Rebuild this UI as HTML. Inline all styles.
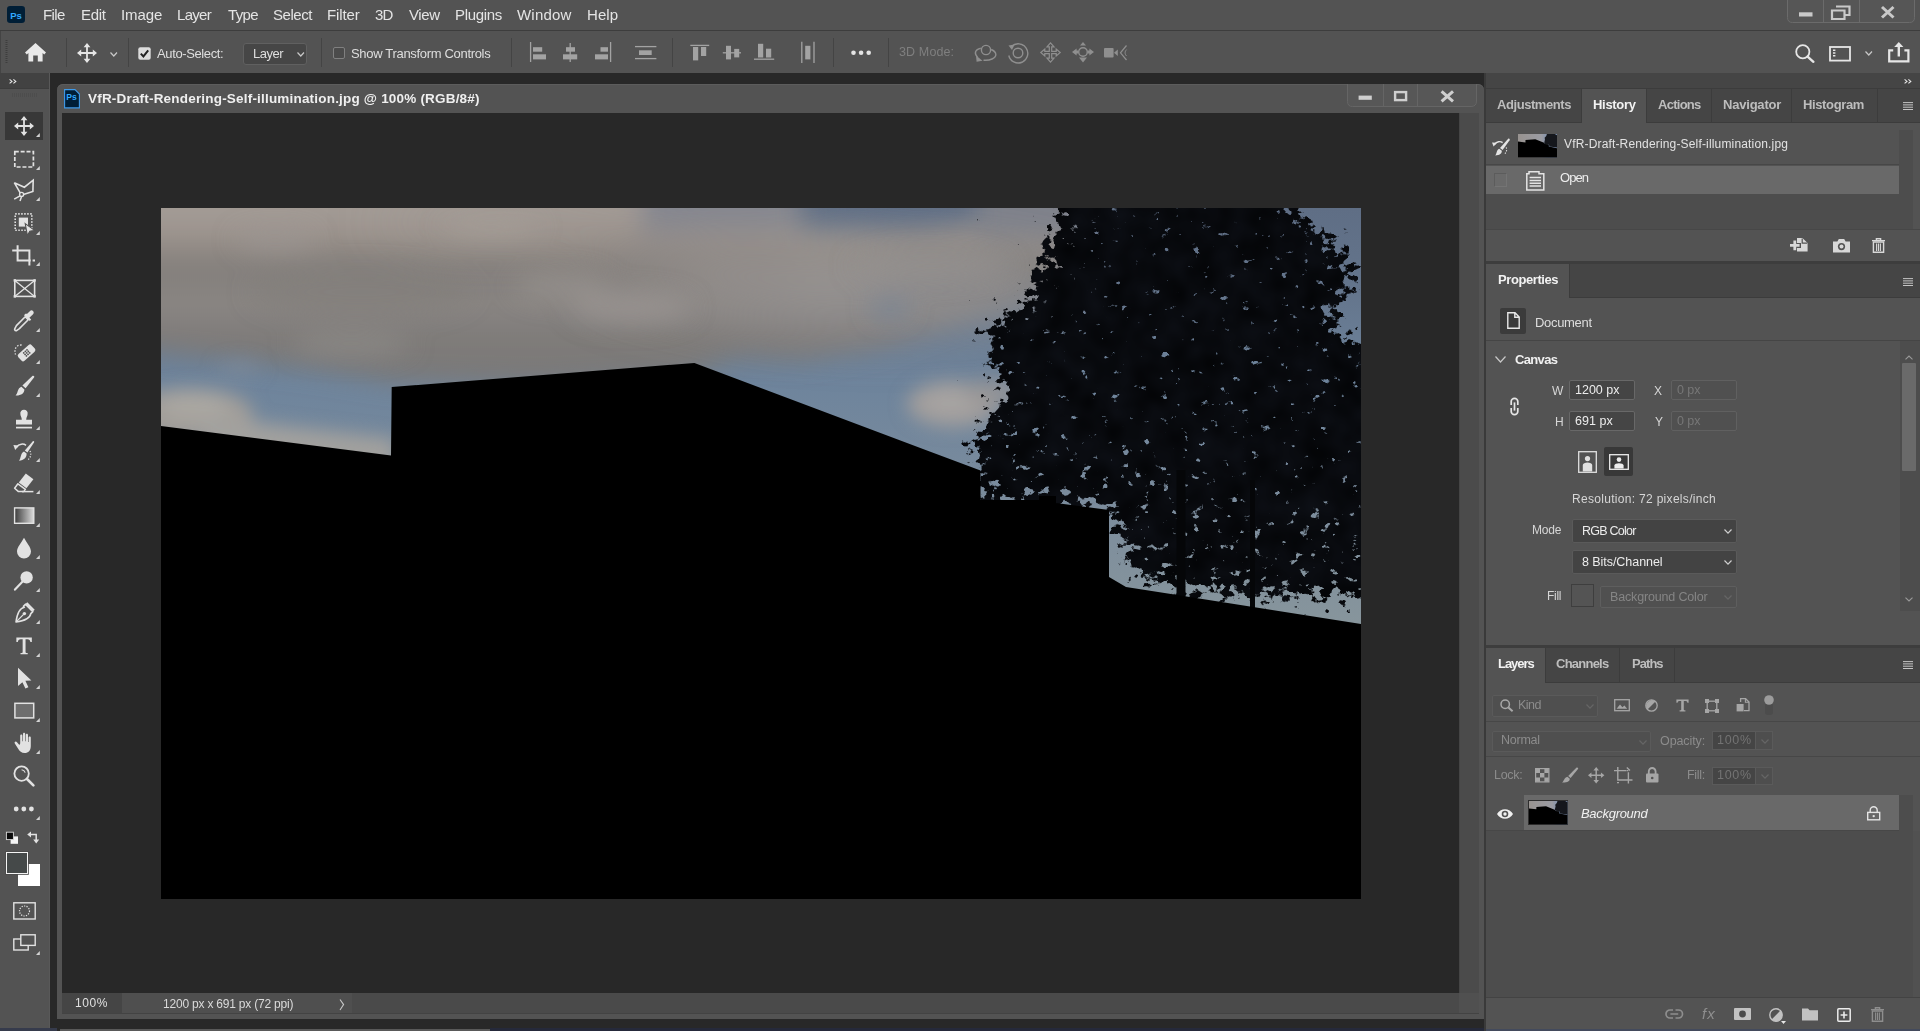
<!DOCTYPE html>
<html>
<head>
<meta charset="utf-8">
<title>Photoshop</title>
<style>
*{margin:0;padding:0;box-sizing:border-box}
html,body{width:1920px;height:1031px;overflow:hidden;background:#535353;font-family:"Liberation Sans",sans-serif;color:#ddd;font-size:13px}
.a{position:absolute}
.t{position:absolute;white-space:nowrap;line-height:1;will-change:transform}
svg{position:absolute;overflow:visible}
</style>
</head>
<body>
<!-- TOPBARS -->
<div class="a" style="left:0px;top:0px;width:1920px;height:30px;background:#535353;"></div>
<div class="a" style="left:0px;top:30px;width:1920px;height:1px;background:#3d3d3d;"></div>
<div class="a" style="left:0px;top:31px;width:1920px;height:42px;background:#535353;"></div>
<svg style="left:7px;top:6px;" width="18" height="17" viewBox="0 0 18 17"><rect width="18" height="17" rx="3.2" fill="#001e36"/><text x="9" y="12.6" font-family="Liberation Sans" font-weight="bold" font-size="9.5" fill="#31a8ff" text-anchor="middle">Ps</text></svg>
<div class="t" style="left:43.3px;top:6.90px;font-size:15px;color:#e4e4e4;letter-spacing:-0.590px;">File</div>
<div class="t" style="left:81.0px;top:6.90px;font-size:15px;color:#e4e4e4;letter-spacing:-0.283px;">Edit</div>
<div class="t" style="left:121.0px;top:6.90px;font-size:15px;color:#e4e4e4;letter-spacing:-0.098px;">Image</div>
<div class="t" style="left:177.3px;top:6.90px;font-size:15px;color:#e4e4e4;letter-spacing:-0.706px;">Layer</div>
<div class="t" style="left:227.7px;top:6.90px;font-size:15px;color:#e4e4e4;letter-spacing:-0.640px;">Type</div>
<div class="t" style="left:273.3px;top:6.90px;font-size:15px;color:#e4e4e4;letter-spacing:-0.458px;">Select</div>
<div class="t" style="left:327.3px;top:6.90px;font-size:15px;color:#e4e4e4;letter-spacing:-0.127px;">Filter</div>
<div class="t" style="left:375.0px;top:6.90px;font-size:15px;color:#e4e4e4;letter-spacing:-0.875px;">3D</div>
<div class="t" style="left:409.0px;top:6.90px;font-size:15px;color:#e4e4e4;letter-spacing:-0.414px;">View</div>
<div class="t" style="left:455.0px;top:6.90px;font-size:15px;color:#e4e4e4;letter-spacing:-0.316px;">Plugins</div>
<div class="t" style="left:517.3px;top:6.90px;font-size:15px;color:#e4e4e4;letter-spacing:0.210px;">Window</div>
<div class="t" style="left:587.3px;top:6.90px;font-size:15px;color:#e4e4e4;letter-spacing:0.050px;">Help</div>
<svg style="left:1786px;top:0px;" width="130" height="24" viewBox="0 0 130 24"><path d="M1.5 -1 V17.5 Q1.5 22.5 6.5 22.5 H123.5 Q128.5 22.5 128.5 17.5 V-1" fill="#565656" stroke="#6b6b6b" stroke-width="1"/>
<path d="M37.5 0 V22 M73.5 0 V22" stroke="#6b6b6b" stroke-width="1"/>
<rect x="13" y="12.3" width="13.5" height="4.2" fill="#c9c9c9"/>
<path d="M50 6.5 H63.5 V15 H58 M46 10.5 H58.5 V19 H46Z" fill="none" stroke="#c9c9c9" stroke-width="2.2"/>
<path d="M96 7 L107.5 17.5 M107.5 7 L96 17.5" stroke="#c9c9c9" stroke-width="3"/></svg>
<div class="a" style="left:0px;top:31px;width:1px;height:42px;background:#444;"></div>
<svg style="left:5px;top:40px;" width="3" height="24" viewBox="0 0 3 24"><path d="M1.5 0 V24" stroke="#3e3e3e" stroke-width="2" stroke-dasharray="1 1"/></svg>
<div class="a" style="left:66px;top:38px;width:1px;height:29px;background:#444;"></div>
<div class="a" style="left:128px;top:38px;width:1px;height:29px;background:#444;"></div>
<div class="a" style="left:321px;top:38px;width:1px;height:29px;background:#444;"></div>
<div class="a" style="left:511px;top:38px;width:1px;height:29px;background:#444;"></div>
<div class="a" style="left:672px;top:38px;width:1px;height:29px;background:#444;"></div>
<div class="a" style="left:833px;top:38px;width:1px;height:29px;background:#444;"></div>
<div class="a" style="left:888px;top:38px;width:1px;height:29px;background:#444;"></div>
<svg style="left:25px;top:43px;" width="21" height="19" viewBox="0 0 21 19"><path d="M10.5 0 L21 9.6 L19.2 11.4 L17.6 10 V18.6 H12.8 V12.6 H8.2 V18.6 H3.4 V10 L1.8 11.4 L0 9.6Z" fill="#e9e9e9"/></svg>
<svg style="left:77px;top:42.5px;" width="20" height="20" viewBox="0 0 20 20"><path d="M10 0 L13.4 4.2 H10.9 V9.1 H15.8 V6.6 L20 10 L15.8 13.4 V10.9 H10.9 V15.8 H13.4 L10 20 L6.6 15.8 H9.1 V10.9 H4.2 V13.4 L0 10 L4.2 6.6 V9.1 H9.1 V4.2 H6.6Z" fill="#e6e6e6"/></svg>
<svg style="left:110px;top:51.5px;" width="8" height="5" viewBox="0 0 8 5"><path d="M0.5 0.5 L3.8 4 L7 0.5" fill="none" stroke="#c8c8c8" stroke-width="1.2"/></svg>
<svg style="left:138px;top:46.5px;" width="13" height="13" viewBox="0 0 13 13"><rect x="0.3" y="0.3" width="12.4" height="12.4" rx="2" fill="#dcdcdc"/><path d="M2.8 6.6 L5.4 9.4 L10.2 3.4" fill="none" stroke="#222" stroke-width="2"/></svg>
<div class="t" style="left:157.3px;top:47.30px;font-size:13px;color:#dedede;letter-spacing:-0.374px;">Auto-Select:</div>
<div class="a" style="left:243px;top:43px;width:64px;height:22px;background:#464646;border:1px solid #606060;border-radius:3px;"></div>
<div class="t" style="left:252.7px;top:47.30px;font-size:13px;color:#dedede;letter-spacing:-0.480px;">Layer</div>
<svg style="left:296.5px;top:52px;" width="8" height="5" viewBox="0 0 8 5"><path d="M0.5 0.5 L3.8 4 L7 0.5" fill="none" stroke="#c8c8c8" stroke-width="1.2"/></svg>
<div class="a" style="left:333px;top:47px;width:12px;height:12px;background:#4b4b4b;border:1px solid #808080;border-radius:2px;"></div>
<div class="t" style="left:351.0px;top:47.30px;font-size:13px;color:#dedede;letter-spacing:-0.317px;">Show Transform Controls</div>
<svg style="left:0px;top:0px;" width="900" height="74" viewBox="0 0 900 74"><rect x="533" y="47.2" width="9.2" height="4.5" fill="#a3a3a3"/><rect x="533" y="54.3" width="13.0" height="5.1" fill="#a3a3a3"/><path d="M530.6 42 L530.6 62" stroke="#a3a3a3" stroke-width="1.3"/><rect x="566" y="47.2" width="9.0" height="4.5" fill="#a3a3a3"/><rect x="563" y="54.3" width="14.2" height="5.1" fill="#a3a3a3"/><path d="M570.2 43 L570.2 62" stroke="#a3a3a3" stroke-width="1.3"/><rect x="600.5" y="47.2" width="7.5" height="4.5" fill="#a3a3a3"/><rect x="595" y="54.3" width="13.0" height="5.1" fill="#a3a3a3"/><path d="M610.6 42 L610.6 62" stroke="#a3a3a3" stroke-width="1.3"/><rect x="639" y="50.3" width="12.7" height="4.7" fill="#a3a3a3"/><path d="M635 46.6 L656.4 46.6" stroke="#a3a3a3" stroke-width="1.3"/><path d="M635 58.6 L656.4 58.6" stroke="#a3a3a3" stroke-width="1.3"/><rect x="693" y="47" width="5.2" height="13.4" fill="#a3a3a3"/><rect x="701" y="47" width="5.2" height="9.0" fill="#a3a3a3"/><path d="M690.3 45.4 L709.2 45.4" stroke="#a3a3a3" stroke-width="1.3"/><rect x="726" y="45.8" width="5.0" height="13.6" fill="#a3a3a3"/><rect x="734.2" y="48.9" width="5.0" height="8.5" fill="#a3a3a3"/><path d="M722.8 52.8 L741 52.8" stroke="#a3a3a3" stroke-width="1.3"/><rect x="758" y="43.8" width="5.2" height="13.7" fill="#a3a3a3"/><rect x="766" y="48.7" width="5.2" height="8.8" fill="#a3a3a3"/><path d="M754 59.2 L774.2 59.2" stroke="#a3a3a3" stroke-width="1.3"/><rect x="805.2" y="45.8" width="5.2" height="13.6" fill="#a3a3a3"/><path d="M801.8 41.8 L801.8 62.9" stroke="#a3a3a3" stroke-width="1.3"/><path d="M814 41.8 L814 62.9" stroke="#a3a3a3" stroke-width="1.3"/><circle cx="853.5" cy="52.8" r="2.3" fill="#e4e4e4"/><circle cx="861.1" cy="52.8" r="2.3" fill="#e4e4e4"/><circle cx="868.7" cy="52.8" r="2.3" fill="#e4e4e4"/></svg>
<div class="t" style="left:899.4px;top:46.22px;font-size:12.5px;color:#7f7f7f;letter-spacing:0.129px;">3D Mode:</div>
<svg style="left:973px;top:43px;" width="25" height="20" viewBox="0 0 25 20"><g fill="none" stroke="#8f8f8f" stroke-width="1.4"><circle cx="13" cy="7" r="4.6"/><path d="M7.8 5.2 C2 6.5 0.8 10.5 4.5 14.2 M18.2 6.5 C24 9 24.5 13.5 19 16 C16.5 17.2 13 17.4 10.5 17.2"/></g><path d="M3 12.5 L9.5 17.8 L3.6 18.8Z" fill="#8f8f8f"/></svg>
<svg style="left:1006px;top:41px;" width="23" height="23" viewBox="0 0 23 23"><g fill="none" stroke="#8f8f8f" stroke-width="1.4"><circle cx="12" cy="12" r="4.8"/><path d="M5.5 5.5 A9.6 9.6 0 1 1 2.8 14.5"/></g><path d="M2.5 4.5 L8.6 3.4 L6 9Z" fill="#8f8f8f"/></svg>
<svg style="left:1039.5px;top:42px;" width="21" height="21" viewBox="0 0 21 21"><path d="M10.5 0.8 L14 4.8 H11.7 V9.3 H16.2 V7 L20.2 10.5 L16.2 14 V11.7 H11.7 V16.2 H14 L10.5 20.2 L7 16.2 H9.3 V11.7 H4.8 V14 L0.8 10.5 L4.8 7 V9.3 H9.3 V4.8 H7Z" fill="none" stroke="#8f8f8f" stroke-width="1.2"/></svg>
<svg style="left:1071.5px;top:42px;" width="22" height="21" viewBox="0 0 22 21"><circle cx="11" cy="10" r="4.3" fill="none" stroke="#8f8f8f" stroke-width="1.4"/><path d="M11 0 L14 3.6 H8Z M11 20.6 L15 15.6 H7Z M0 10 L4.6 6.4 V13.6Z M22 10 L17.4 6.4 V13.6Z" fill="#8f8f8f"/><path d="M4 8.6 h2.2 v2.8 h-2.2z M15.8 8.6 h2.2 v2.8 h-2.2z" fill="#8f8f8f"/></svg>
<svg style="left:1104px;top:44.5px;" width="24" height="16" viewBox="0 0 24 16"><rect x="0" y="3" width="9.6" height="9.6" rx="1" fill="#8f8f8f"/><path d="M10 7.8 L13.8 4.6 V11 Z" fill="#8f8f8f"/><path d="M22.5 0.5 L16.5 7.8 L22.5 15" fill="none" stroke="#8f8f8f" stroke-width="1.2"/><path d="M22.6 4.6 C20.6 6.6 20.6 9 22.6 11" fill="none" stroke="#8f8f8f" stroke-width="1"/></svg>
<svg style="left:1795px;top:44px;" width="20" height="19" viewBox="0 0 20 19"><circle cx="7.8" cy="7.8" r="6.6" fill="none" stroke="#e6e6e6" stroke-width="1.8"/><path d="M12.6 12.6 L18.4 17.8" stroke="#e6e6e6" stroke-width="2.4" stroke-linecap="round"/></svg>
<svg style="left:1829px;top:45.5px;" width="22" height="16" viewBox="0 0 22 16"><rect x="1" y="1" width="20" height="13.6" fill="none" stroke="#e6e6e6" stroke-width="1.8"/><path d="M4 4.2 h2.4 M4 7 h2.4 M4 9.8 h2.4" stroke="#e6e6e6" stroke-width="1.6"/><path d="M7.6 1 V14.6" stroke="#e6e6e6" stroke-width="0"/></svg>
<svg style="left:1864.5px;top:51px;" width="8" height="5" viewBox="0 0 8 5"><path d="M0.5 0.5 L3.8 4 L7 0.5" fill="none" stroke="#c8c8c8" stroke-width="1.2"/></svg>
<svg style="left:1888px;top:41.5px;" width="22" height="21" viewBox="0 0 22 21"><path d="M5.2 8.4 H1.2 V19.4 H20.4 V8.4 H16.4" fill="none" stroke="#e6e6e6" stroke-width="2.2"/><path d="M10.8 14.5 V3.6" stroke="#e6e6e6" stroke-width="2.4"/><path d="M10.8 0 L15.4 5 H6.2Z" fill="#e6e6e6"/></svg>
<!-- WORKSPACE -->
<div class="a" style="left:50px;top:73px;width:1435px;height:958px;background:#282828;"></div>
<div class="a" style="left:0px;top:73px;width:50px;height:958px;background:#535353;"></div>
<!-- TOOLS -->
<div class="a" style="left:0px;top:73px;width:50px;height:15px;background:#424242;"></div>
<div class="a" style="left:0px;top:88px;width:50px;height:1px;background:#3d3d3d;"></div>
<div class="a" style="left:49px;top:73px;width:1px;height:958px;background:#595959;"></div>
<svg style="left:8.5px;top:78.5px;" width="8" height="5" viewBox="0 0 8 5"><path d="M0.6 0.4 L3 2.4 L0.6 4.4 M4.4 0.4 L6.8 2.4 L4.4 4.4" fill="none" stroke="#e8e8e8" stroke-width="1.1"/></svg>
<svg style="left:12px;top:93px;" width="25" height="4" viewBox="0 0 25 4"><path d="M0 1 H25 M0 3 H25" stroke="#484848" stroke-width="1" stroke-dasharray="1 1"/></svg>
<div class="a" style="left:5px;top:111.5px;width:37.5px;height:28px;background:#383838;"></div>
<svg style="left:13.3px;top:115px;" width="22" height="22" viewBox="0 0 22 22"><g transform="translate(1,1)"><path d="M10 0 L13.4 4.2 H10.9 V9.1 H15.8 V6.6 L20 10 L15.8 13.4 V10.9 H10.9 V15.8 H13.4 L10 20 L6.6 15.8 H9.1 V10.9 H4.2 V13.4 L0 10 L4.2 6.6 V9.1 H9.1 V4.2 H6.6Z" fill="#e2e2e2"/></g></svg>
<svg style="left:36.4px;top:133.3px;" width="3.8" height="4" viewBox="0 0 3.8 4"><path d="M3.8 0 V4 H0Z" fill="#d4d4d4"/></svg>
<svg style="left:13.3px;top:147.5px;" width="22" height="22" viewBox="0 0 22 22"><rect x="1.8" y="3.6" width="18.6" height="15.4" fill="none" stroke="#e2e2e2" stroke-width="1.7" stroke-dasharray="4 1.85"/></svg>
<svg style="left:36.4px;top:165.8px;" width="3.8" height="4" viewBox="0 0 3.8 4"><path d="M3.8 0 V4 H0Z" fill="#d4d4d4"/></svg>
<svg style="left:13.3px;top:179px;" width="22" height="22" viewBox="0 0 22 22"><path d="M1.3 3.7 L11.4 8.2 L20.2 1.2 L19.9 12.4 L10.4 15.4 M1.3 3.7 L7.2 13.8" fill="none" stroke="#e2e2e2" stroke-width="1.6" stroke-linejoin="miter"/><circle cx="8.6" cy="15.4" r="2" fill="none" stroke="#e2e2e2" stroke-width="1.4"/><path d="M7 16.8 L1.2 20.2 M8.6 17.6 L7 22" stroke="#e2e2e2" stroke-width="1.5"/></svg>
<svg style="left:36.4px;top:197.3px;" width="3.8" height="4" viewBox="0 0 3.8 4"><path d="M3.8 0 V4 H0Z" fill="#d4d4d4"/></svg>
<svg style="left:13.3px;top:212.5px;" width="22" height="22" viewBox="0 0 22 22"><rect x="2.2" y="0.9" width="16.6" height="16.4" fill="none" stroke="#e2e2e2" stroke-width="1.6" stroke-dasharray="1.5 1.5"/><rect x="5.8" y="4.6" width="9.2" height="9" fill="#e2e2e2"/><path d="M12.2 10.6 L21.6 17.4 L16.8 18.2 L14.4 22.6Z" fill="#e2e2e2" stroke="#535353" stroke-width="1.1"/></svg>
<svg style="left:36.4px;top:230.8px;" width="3.8" height="4" viewBox="0 0 3.8 4"><path d="M3.8 0 V4 H0Z" fill="#d4d4d4"/></svg>
<svg style="left:13.3px;top:244px;" width="22" height="22" viewBox="0 0 22 22"><path d="M4.6 1.2 V16.6 H17.8 M19.6 16.6 H22 M-0.8 6.4 H16.4 V21.6" fill="none" stroke="#e2e2e2" stroke-width="2"/></svg>
<svg style="left:36.4px;top:262.3px;" width="3.8" height="4" viewBox="0 0 3.8 4"><path d="M3.8 0 V4 H0Z" fill="#d4d4d4"/></svg>
<svg style="left:13.3px;top:277px;" width="22" height="22" viewBox="0 0 22 22"><rect x="1.8" y="3.4" width="19.8" height="16" fill="none" stroke="#e2e2e2" stroke-width="1.6"/><path d="M1.8 3.4 L21.6 19.4 M21.6 3.4 L1.8 19.4" stroke="#e2e2e2" stroke-width="1.3"/><g fill="#e2e2e2"><rect x="0.6" y="2.2" width="2.4" height="2.4"/><rect x="20.4" y="2.2" width="2.4" height="2.4"/><rect x="0.6" y="18.2" width="2.4" height="2.4"/><rect x="20.4" y="18.2" width="2.4" height="2.4"/></g></svg>
<svg style="left:13.3px;top:309.5px;" width="22" height="22" viewBox="0 0 22 22"><path d="M3.2 20.8 C1.6 20.8 1.2 19.2 2.2 18 L3.4 15.6 L12.2 6.8 L15.2 9.8 L6.4 18.6 Z" fill="none" stroke="#e2e2e2" stroke-width="1.6" stroke-linejoin="round"/><path d="M11 5.2 L16.8 11 L18.2 9.6 L16.4 7.8 L19.8 4.4 C21.2 3 20.8 1.6 20 0.9 C19 0.1 17.8 0.2 16.8 1.2 L14.2 3.8 L12.4 3.8Z" fill="#e2e2e2"/></svg>
<svg style="left:36.4px;top:327.8px;" width="3.8" height="4" viewBox="0 0 3.8 4"><path d="M3.8 0 V4 H0Z" fill="#d4d4d4"/></svg>
<svg style="left:13.3px;top:342px;" width="22" height="22" viewBox="0 0 22 22"><g transform="rotate(-42 13 11)"><rect x="4.5" y="6.8" width="18" height="9" rx="2.2" fill="#e2e2e2"/><g fill="#535353"><circle cx="11.4" cy="9.4" r="0.9"/><circle cx="13.6" cy="9.4" r="0.9"/><circle cx="15.8" cy="9.4" r="0.9"/><circle cx="11.4" cy="11.4" r="0.9"/><circle cx="13.6" cy="11.4" r="0.9"/><circle cx="15.8" cy="11.4" r="0.9"/><circle cx="11.4" cy="13.4" r="0.9"/><circle cx="13.6" cy="13.4" r="0.9"/><circle cx="15.8" cy="13.4" r="0.9"/></g></g><path d="M8.6 3 C3.4 2.6 0.6 7.4 2.6 12.6" fill="none" stroke="#e2e2e2" stroke-width="1.3" stroke-dasharray="1.5 1.6"/></svg>
<svg style="left:36.4px;top:360.3px;" width="3.8" height="4" viewBox="0 0 3.8 4"><path d="M3.8 0 V4 H0Z" fill="#d4d4d4"/></svg>
<svg style="left:13.3px;top:374.5px;" width="22" height="22" viewBox="0 0 22 22"><path d="M19.6 0.8 C20.8 0.2 21.8 1.4 21 2.6 L12.6 13.2 L9.4 10.6Z" fill="#e2e2e2"/><path d="M8.4 11.8 L11.4 14.4 C11.4 18.4 8 20.6 2.6 20.4 C5 18.6 4.4 13 8.4 11.8Z" fill="#e2e2e2"/></svg>
<svg style="left:36.4px;top:392.8px;" width="3.8" height="4" viewBox="0 0 3.8 4"><path d="M3.8 0 V4 H0Z" fill="#d4d4d4"/></svg>
<svg style="left:13.3px;top:407.5px;" width="22" height="22" viewBox="0 0 22 22"><g transform="translate(0,1.4)"><path d="M7.4 4.8 A3.7 3.7 0 1 1 14.6 4.8 C14.6 6.8 13.2 7.4 13.2 10.4 H19 V15.2 H3 V10.4 H8.8 C8.8 7.4 7.4 6.8 7.4 4.8Z" fill="#e2e2e2"/><path d="M3 18.2 H19" stroke="#e2e2e2" stroke-width="1.7"/></g></svg>
<svg style="left:36.4px;top:425.8px;" width="3.8" height="4" viewBox="0 0 3.8 4"><path d="M3.8 0 V4 H0Z" fill="#d4d4d4"/></svg>
<svg style="left:13.3px;top:439.5px;" width="22" height="22" viewBox="0 0 22 22"><path d="M19.8 1.2 C20.8 0.6 21.6 1.6 21 2.6 L14.4 12.6 L11.8 10.6Z" fill="#e2e2e2"/><path d="M11 11.6 L13.6 13.6 C13.8 17.4 11 20.6 6 20.8 C8 18.8 7.4 13.2 11 11.6Z" fill="#e2e2e2"/><path d="M3.4 7.2 C6 3.6 10.6 3.4 13 5.4" fill="none" stroke="#e2e2e2" stroke-width="1.5"/><path d="M0.4 5 L6 5.6 L2.2 10Z" fill="#e2e2e2"/><path d="M17 11 C18.6 14.4 17.6 17.8 15 19.6" fill="none" stroke="#e2e2e2" stroke-width="1.2" stroke-dasharray="1.2 1.5"/></svg>
<svg style="left:36.4px;top:457.8px;" width="3.8" height="4" viewBox="0 0 3.8 4"><path d="M3.8 0 V4 H0Z" fill="#d4d4d4"/></svg>
<svg style="left:13.3px;top:472px;" width="22" height="22" viewBox="0 0 22 22"><path d="M12.8 1.6 L20.4 7.2 L13.4 16.2 L5.8 10.6Z" fill="#e2e2e2"/><path d="M4.9 11.8 L12.4 17.4 L10.8 19.4 H5.2 L1.6 16.2Z" fill="none" stroke="#e2e2e2" stroke-width="1.5" stroke-linejoin="round"/><path d="M9 19.6 H20.4" stroke="#e2e2e2" stroke-width="1.5"/></svg>
<svg style="left:36.4px;top:490.3px;" width="3.8" height="4" viewBox="0 0 3.8 4"><path d="M3.8 0 V4 H0Z" fill="#d4d4d4"/></svg>
<svg style="left:13.3px;top:504.5px;" width="22" height="22" viewBox="0 0 22 22"><defs><linearGradient id="tg" x1="0" x2="1"><stop offset="0" stop-color="#3c3c3c"/><stop offset="1" stop-color="#dcdcdc"/></linearGradient></defs><rect x="1.6" y="2.9" width="19.2" height="15.4" fill="url(#tg)" stroke="#e2e2e2" stroke-width="1.4"/></svg>
<svg style="left:36.4px;top:522.8px;" width="3.8" height="4" viewBox="0 0 3.8 4"><path d="M3.8 0 V4 H0Z" fill="#d4d4d4"/></svg>
<svg style="left:13.3px;top:537px;" width="22" height="22" viewBox="0 0 22 22"><path d="M11 0.8 C13.6 5.8 18 10.2 18 14.6 A7 7 0 0 1 4 14.6 C4 10.2 8.4 5.8 11 0.8Z" fill="#e2e2e2"/></svg>
<svg style="left:36.4px;top:555.3px;" width="3.8" height="4" viewBox="0 0 3.8 4"><path d="M3.8 0 V4 H0Z" fill="#d4d4d4"/></svg>
<svg style="left:13.3px;top:569.5px;" width="22" height="22" viewBox="0 0 22 22"><circle cx="13.6" cy="7.4" r="6.2" fill="#e2e2e2"/><path d="M9.6 11.6 L2 19.6" stroke="#e2e2e2" stroke-width="2.2" stroke-linecap="round"/></svg>
<svg style="left:36.4px;top:587.8px;" width="3.8" height="4" viewBox="0 0 3.8 4"><path d="M3.8 0 V4 H0Z" fill="#d4d4d4"/></svg>
<svg style="left:13.3px;top:602px;" width="22" height="22" viewBox="0 0 22 22"><path d="M12.4 2.2 L19.8 9.6 L17.8 11.6 C17.2 15.4 13.4 18.6 3 20 C4.4 9.6 7.6 5.8 11.4 5.2 L10.4 4.2Z" fill="none" stroke="#e2e2e2" stroke-width="1.6" stroke-linejoin="round"/><path d="M3.4 19.6 L10.6 12.4" stroke="#e2e2e2" stroke-width="1.3"/><circle cx="11.4" cy="11.6" r="1.7" fill="#e2e2e2"/><path d="M13.4 1.2 L20.8 8.6" stroke="#e2e2e2" stroke-width="2.6"/></svg>
<svg style="left:36.4px;top:620.3px;" width="3.8" height="4" viewBox="0 0 3.8 4"><path d="M3.8 0 V4 H0Z" fill="#d4d4d4"/></svg>
<svg style="left:13.3px;top:634.5px;" width="22" height="22" viewBox="0 0 22 22"><path transform="translate(1.2,1) scale(0.9)" d="M2.4 1.6 H19.6 V6.8 H18 C17.6 4.6 16.8 3.6 14.8 3.6 H12.6 V17.4 C12.6 18.6 13.2 19 15 19 V20.4 H7 V19 C8.8 19 9.4 18.6 9.4 17.4 V3.6 H7.2 C5.2 3.6 4.4 4.6 4 6.8 H2.4Z" fill="#e2e2e2"/></svg>
<svg style="left:36.4px;top:652.8px;" width="3.8" height="4" viewBox="0 0 3.8 4"><path d="M3.8 0 V4 H0Z" fill="#d4d4d4"/></svg>
<svg style="left:13.3px;top:667px;" width="22" height="22" viewBox="0 0 22 22"><path d="M5 0.8 L18.4 13.4 L12.4 13.8 L15.4 20.2 L12.4 21.6 L9.4 15.2 L5 19Z" fill="#e2e2e2"/></svg>
<svg style="left:36.4px;top:685.3px;" width="3.8" height="4" viewBox="0 0 3.8 4"><path d="M3.8 0 V4 H0Z" fill="#d4d4d4"/></svg>
<svg style="left:13.3px;top:699.5px;" width="22" height="22" viewBox="0 0 22 22"><rect x="1.9" y="3.3" width="18.8" height="14.6" fill="#6e6e6e" stroke="#e2e2e2" stroke-width="1.5"/></svg>
<svg style="left:36.4px;top:717.8px;" width="3.8" height="4" viewBox="0 0 3.8 4"><path d="M3.8 0 V4 H0Z" fill="#d4d4d4"/></svg>
<svg style="left:13.3px;top:732px;" width="22" height="22" viewBox="0 0 22 22"><path d="M7.2 11.4 V3.8 C7.2 2.2 9.4 2.2 9.4 3.8 V9.2 H10 V2 C10 0.4 12.2 0.4 12.2 2 V9.2 H12.8 V3 C12.8 1.4 15 1.4 15 3 V10 H15.6 V5.6 C15.6 4 17.8 4 17.8 5.6 V14 C17.8 18.4 15.4 21 11.6 21 C8.4 21 6.8 19.6 5 16.6 L1.8 11.4 C1 10 2.8 8.8 4 10.2 L6.4 13 Z" fill="#e2e2e2"/></svg>
<svg style="left:36.4px;top:750.3px;" width="3.8" height="4" viewBox="0 0 3.8 4"><path d="M3.8 0 V4 H0Z" fill="#d4d4d4"/></svg>
<svg style="left:13.3px;top:764.5px;" width="22" height="22" viewBox="0 0 22 22"><circle cx="8.6" cy="8.6" r="7.2" fill="none" stroke="#e2e2e2" stroke-width="1.8"/><path d="M14 14 L20.4 20.4" stroke="#e2e2e2" stroke-width="2.6" stroke-linecap="round"/><path d="M12.2 7.6 C11.6 5.8 10.2 5 8.6 4.8" fill="none" stroke="#e2e2e2" stroke-width="1.1"/></svg>
<svg style="left:13.3px;top:797.5px;" width="22" height="22" viewBox="0 0 22 22"><circle cx="3.2" cy="11" r="2.4" fill="#e2e2e2"/><circle cx="10.8" cy="11" r="2.4" fill="#e2e2e2"/><circle cx="18.4" cy="11" r="2.4" fill="#e2e2e2"/></svg>
<svg style="left:36.4px;top:815.8px;" width="3.8" height="4" viewBox="0 0 3.8 4"><path d="M3.8 0 V4 H0Z" fill="#d4d4d4"/></svg>
<svg style="left:6px;top:832px;" width="13" height="12" viewBox="0 0 13 12"><rect x="4.6" y="4.4" width="7.4" height="7.4" fill="#f4f4f4"/><rect x="0.4" y="0.2" width="7" height="7.4" fill="#0a0a0a" stroke="#d8d8d8" stroke-width="0.9"/></svg>
<svg style="left:27px;top:831px;" width="13" height="13" viewBox="0 0 13 13"><path d="M3 3.4 H9.2 V9" fill="none" stroke="#e2e2e2" stroke-width="1.5"/><path d="M0.2 3.4 L4 0.4 V6.4Z M9.2 12.6 L6.2 8.6 H12.2Z" fill="#e2e2e2"/></svg>
<div class="a" style="left:17.8px;top:863.7px;width:22.4px;height:22px;background:#ffffff;"></div>
<div class="a" style="left:5.6px;top:851.6px;width:22.6px;height:22px;background:#454949;border:1.3px solid #f4f4f4;box-shadow:0 0 0 0.8px #4a4a4a;"></div>
<svg style="left:12.5px;top:901.5px;" width="23" height="18" viewBox="0 0 23 18"><rect x="0.8" y="0.8" width="21.4" height="16.2" fill="none" stroke="#e2e2e2" stroke-width="1.4"/><circle cx="11.5" cy="9" r="5" fill="none" stroke="#e2e2e2" stroke-width="1.2" stroke-dasharray="1.2 1.3"/></svg>
<svg style="left:12.5px;top:934px;" width="23" height="17" viewBox="0 0 23 17"><rect x="0.8" y="5" width="14.4" height="11" fill="none" stroke="#e2e2e2" stroke-width="1.4"/><rect x="7.8" y="0.8" width="14.4" height="10.6" fill="#535353" stroke="#e2e2e2" stroke-width="1.4"/></svg>
<svg style="left:36.4px;top:950.8px;" width="3.8" height="4" viewBox="0 0 3.8 4"><path d="M3.8 0 V4 H0Z" fill="#d4d4d4"/></svg>
<!-- DOCWIN -->
<div class="a" style="left:57px;top:84px;width:1427px;height:935px;background:#535353;border-radius:6px 6px 0 0;box-shadow:inset 0 1px 0 #5c5c5c;"></div>
<div class="a" style="left:62px;top:113px;width:1397px;height:880px;background:#282828;"></div>
<div class="a" style="left:1459px;top:113px;width:20px;height:880px;background:#4b4b4b;border-left:1px solid #454545;"></div>
<div class="a" style="left:62px;top:993px;width:1417px;height:21px;background:#4a4a4a;"></div>
<div class="a" style="left:62px;top:1013px;width:1417px;height:1px;background:#434343;"></div>
<div class="a" style="left:1459px;top:993px;width:20px;height:20px;background:#505050;"></div>
<div class="a" style="left:490px;top:1028px;width:995px;height:3px;background:#25293a;"></div>
<div class="a" style="left:60px;top:1029px;width:430px;height:2px;background:#595959;"></div>
<div class="a" style="left:0px;top:1028px;width:57px;height:3px;background:#363b4c;"></div>
<svg style="left:64px;top:88.5px;" width="16" height="19.5" viewBox="0 0 16 19.5"><path d="M0.6 0.6 H11 L15.4 5 V18.9 H0.6Z" fill="#001e36" stroke="#3f9bea" stroke-width="1.1"/><text x="7.6" y="11.2" font-family="Liberation Sans" font-weight="bold" font-size="8.6" fill="#31a8ff" text-anchor="middle">Ps</text></svg>
<div class="t" style="left:87.8px;top:92.37px;font-size:13.5px;color:#efefef;font-weight:bold;letter-spacing:0.193px;">VfR-Draft-Rendering-Self-illumination.jpg @ 100% (RGB/8#)</div>
<svg style="left:1346px;top:84px;" width="133" height="25" viewBox="0 0 133 25"><path d="M1.5 0 V17.5 Q1.5 22.5 6.5 22.5 H125 Q130.5 22.5 130.5 17 V0" fill="#575757" stroke="#656565" stroke-width="1"/>
<path d="M37.5 0 V22 M71.5 0 V22" stroke="#656565" stroke-width="1"/>
<rect x="12.6" y="11.6" width="13.2" height="4.2" fill="#cfcfcf"/>
<rect x="49.1" y="8.1" width="11" height="8" fill="none" stroke="#cfcfcf" stroke-width="2.4"/>
<path d="M95.6 7.4 L107 17.4 M107 7.4 L95.6 17.4" stroke="#cfcfcf" stroke-width="3"/></svg>
<div class="a" style="left:62px;top:993px;width:60px;height:20px;background:#454545;"></div>
<div class="a" style="left:122px;top:993px;width:230px;height:20px;background:#4f4f4f;"></div>
<div class="t" style="left:75.3px;top:997.24px;font-size:12px;color:#e0e0e0;letter-spacing:0.603px;">100%</div>
<div class="t" style="left:162.5px;top:998.44px;font-size:12px;color:#dadada;letter-spacing:-0.205px;">1200 px x 691 px (72 ppi)</div>
<svg style="left:339px;top:999px;" width="6" height="12" viewBox="0 0 6 12"><path d="M1 0.5 L4.6 5.6 L1 11" fill="none" stroke="#c8c8c8" stroke-width="1.1"/></svg>
<!-- PHOTO -->
<svg id="photo" style="left:161px;top:208px" width="1200" height="691" viewBox="0 0 1200 691">
<defs>
<linearGradient id="skyg" x1="0" y1="0" x2="0" y2="416" gradientUnits="userSpaceOnUse">
<stop offset="0" stop-color="#5f6e85"/><stop offset="0.2" stop-color="#64758c"/><stop offset="0.42" stop-color="#6e849c"/><stop offset="0.7" stop-color="#7b8c9d"/><stop offset="1" stop-color="#87959c"/>
</linearGradient>
<linearGradient id="cg" x1="0" y1="0" x2="0" y2="200" gradientUnits="userSpaceOnUse">
<stop offset="0" stop-color="#a39b95"/><stop offset="0.1" stop-color="#a09791"/><stop offset="0.3" stop-color="#827e7a"/><stop offset="0.5" stop-color="#8b8784"/><stop offset="0.6" stop-color="#807c7a"/><stop offset="0.8" stop-color="#7b7978"/><stop offset="1" stop-color="#777779"/>
</linearGradient>
<filter id="b30" x="-30%" y="-60%" width="160%" height="220%"><feGaussianBlur stdDeviation="28"/></filter>
<filter id="b18" x="-30%" y="-60%" width="160%" height="220%"><feGaussianBlur stdDeviation="12"/></filter>
<filter id="b10" x="-30%" y="-60%" width="160%" height="220%"><feGaussianBlur stdDeviation="9"/></filter>
<filter id="leaf" x="-5%" y="-5%" width="110%" height="110%" color-interpolation-filters="sRGB">
<feGaussianBlur in="SourceAlpha" stdDeviation="11" result="b"/>
<feTurbulence type="fractalNoise" baseFrequency="0.10 0.125" numOctaves="4" seed="11" result="n"/>
<feComposite in="b" in2="n" operator="arithmetic" k1="0" k2="1" k3="1.5" k4="-0.92" result="m"/>
<feComponentTransfer in="m" result="th"><feFuncA type="linear" slope="8" intercept="-2.5"/></feComponentTransfer>
<feTurbulence type="fractalNoise" baseFrequency="0.035" numOctaves="2" seed="3" result="n2"/>
<feColorMatrix in="n2" type="matrix" values="0.05 0 0 0 0.006  0.058 0 0 0 0.009  0.08 0 0 0 0.014  0 0 0 0 1" result="c"/>
<feComposite in="c" in2="th" operator="in"/>
</filter>
<clipPath id="pc"><rect width="1200" height="691"/></clipPath>
</defs>
<g clip-path="url(#pc)">
<rect width="1200" height="691" fill="url(#skyg)"/>
<g filter="url(#b18)">
<path d="M-60,-60 L520,-60 L575,6 L650,26 L760,22 L905,6 L915,60 L862,92 L792,114 L722,138 L642,152 L575,150 L520,170 L380,178 L232,174 L150,161 L60,150 L-60,139 Z" fill="url(#cg)"/>
<rect x="480" y="-60" width="160" height="86" fill="#858790"/>
<rect x="815" y="-60" width="110" height="90" fill="#7f828b"/>
</g>
<g filter="url(#b30)">
<ellipse cx="725" cy="82" rx="200" ry="36" fill="#8d8c8e" opacity=".95"/>
<ellipse cx="615" cy="60" rx="115" ry="28" fill="#9e9995" opacity=".9"/>
<ellipse cx="540" cy="62" rx="110" ry="36" fill="#8f8b89" opacity=".55"/>
<ellipse cx="345" cy="14" rx="130" ry="14" fill="#a29993" opacity=".5"/>
</g>
<g filter="url(#b18)">
<ellipse cx="114" cy="32" rx="40" ry="9" fill="#9c9794" opacity=".7"/>
<ellipse cx="330" cy="19" rx="48" ry="9" fill="#a69f99" opacity=".7"/>
<ellipse cx="190" cy="136" rx="60" ry="12" fill="#8f8b89" opacity=".7"/>
<ellipse cx="200" cy="84" rx="110" ry="24" fill="#827e7b" opacity=".6"/>
<ellipse cx="400" cy="78" rx="48" ry="14" fill="#96918e" opacity=".75"/>
<ellipse cx="470" cy="100" rx="60" ry="15" fill="#9a9592" opacity=".8"/>
<ellipse cx="770" cy="58" rx="80" ry="13" fill="#9a9794" opacity=".55"/>
<ellipse cx="729" cy="101" rx="20" ry="9" fill="#6f8198" opacity=".7"/>
</g>
<g filter="url(#b10)">
<ellipse cx="28" cy="206" rx="64" ry="26" fill="#a29e99"/>
<ellipse cx="34" cy="198" rx="34" ry="12" fill="#aaa7a2"/>
<path d="M40 207 L130 219 L235 231 L235 262 L40 240Z" fill="#a3a19e"/>
<ellipse cx="78" cy="160" rx="22" ry="7" fill="#7f8c9c" opacity=".7"/>
<ellipse cx="792" cy="196" rx="46" ry="23" fill="#a29e9c"/>
<ellipse cx="790" cy="194" rx="24" ry="10" fill="#a7a4a3"/>
<ellipse cx="832" cy="184" rx="30" ry="14" fill="#979596" opacity=".8"/>
</g>
<g filter="url(#leaf)">
<path d="M897,-30 L890,17 L885,44 L868,61 L872,82 L858,96 L828,110 L822,127 L832,145 L820,158 L845,175 L836,193 L818,219 L808,241 L816,268 L819,300 L948,300 L950,307 L964,351 L977,373 L1047,388 L1135,392 L1179,391 L1240,390 L1240,140 L1195,135 L1176,120 L1173,100 L1186,85 L1200,72 L1195,58 L1185,44 L1170,25 L1150,18 L1135,5 L1130,-30 Z" fill="#000" fill-opacity=".86"/>
<path d="M900,-30 L890,60 L850,120 L850,200 L900,240 L1000,250 L1080,300 L1180,300 L1240,280 L1240,160 L1160,120 L1150,40 L1120,-30Z" fill="#000" fill-opacity=".6"/>
</g>
<rect x="1015.5" y="262" width="9" height="128" fill="#050608"/>
<rect x="1089" y="272" width="5" height="130" fill="#050608"/>

<path d="M0 218 L230 247.5 L230.7 179 L533.4 155 L819.5 262.5 L819.5 292 L878 292 L878 288 L895 288 L895 295 L948 302 L948 369 L965 379 L1200 416 L1200 691 L0 691Z" fill="#000"/>
</g>
</svg>
<!-- RIGHT -->
<div class="a" style="left:1484px;top:73px;width:2px;height:958px;background:#3a3a3a;"></div>
<div class="a" style="left:1486px;top:73px;width:434px;height:958px;background:#535353;"></div>
<div class="a" style="left:1486px;top:73px;width:434px;height:15px;background:#454545;"></div>
<div class="a" style="left:1486px;top:88px;width:434px;height:1px;background:#3c3c3c;"></div>
<svg style="left:1903.5px;top:78.5px;" width="8" height="5" viewBox="0 0 8 5"><path d="M0.6 0.4 L3 2.4 L0.6 4.4 M4.4 0.4 L6.8 2.4 L4.4 4.4" fill="none" stroke="#e8e8e8" stroke-width="1.1"/></svg>
<div class="a" style="left:1486px;top:89px;width:434px;height:34px;background:#454545;"></div>
<div class="a" style="left:1486px;top:122px;width:434px;height:1px;background:#3c3c3c;"></div>
<div class="a" style="left:1582px;top:89px;width:64px;height:34px;background:#535353;"></div>
<div class="a" style="left:1581px;top:89px;width:1px;height:33px;background:#3c3c3c;"></div>
<div class="a" style="left:1646px;top:89px;width:1px;height:33px;background:#3c3c3c;"></div>
<div class="a" style="left:1711px;top:89px;width:1px;height:33px;background:#3c3c3c;"></div>
<div class="a" style="left:1791px;top:89px;width:1px;height:33px;background:#3c3c3c;"></div>
<div class="a" style="left:1877px;top:89px;width:1px;height:33px;background:#3c3c3c;"></div>
<div class="t" style="left:1497.3px;top:98.30px;font-size:13px;color:#bdbdbd;font-weight:bold;letter-spacing:-0.433px;">Adjustments</div>
<div class="t" style="left:1592.7px;top:98.30px;font-size:13px;color:#f2f2f2;font-weight:bold;letter-spacing:-0.298px;">History</div>
<div class="t" style="left:1657.7px;top:98.30px;font-size:13px;color:#bdbdbd;font-weight:bold;letter-spacing:-0.729px;">Actions</div>
<div class="t" style="left:1722.7px;top:98.30px;font-size:13px;color:#bdbdbd;font-weight:bold;letter-spacing:-0.208px;">Navigator</div>
<div class="t" style="left:1802.7px;top:98.30px;font-size:13px;color:#bdbdbd;font-weight:bold;letter-spacing:-0.374px;">Histogram</div>
<svg style="left:1903px;top:101.5px;" width="10" height="8" viewBox="0 0 10 8"><path d="M0 0.6 H10 M0 2.9 H10 M0 5.2 H10 M0 7.5 H10" stroke="#c4c4c4" stroke-width="1"/></svg>
<div class="a" style="left:1899px;top:130px;width:14px;height:99px;background:#4d4d4d;"></div>
<div class="a" style="left:1486px;top:194px;width:413px;height:35px;background:#4d4d4d;"></div>
<div class="a" style="left:1486px;top:164px;width:413px;height:1px;background:#474747;"></div>
<div class="a" style="left:1486px;top:166px;width:413px;height:28px;background:#696969;"></div>
<svg style="left:1491.5px;top:137.5px;" width="19" height="18" viewBox="0 0 19 18"><path d="M16.2 0.8 C17.2 0.2 18.2 1.2 17.6 2.2 L10.6 12 L8 10Z" fill="#e4e4e4"/><path d="M7.2 10.8 L9.8 12.8 C10 15.6 7.6 17.4 3.2 17.4 C5 15.8 4.4 11.8 7.2 10.8Z" fill="#e4e4e4"/><path d="M2.6 6.4 C4.6 3.4 8.4 3 10.6 4.6" fill="none" stroke="#e4e4e4" stroke-width="1.4"/><path d="M0 4.4 L5 4.8 L1.6 8.6Z" fill="#e4e4e4"/><path d="M14.2 9.4 C15.2 12 14.4 14.6 12.4 16" fill="none" stroke="#e4e4e4" stroke-width="1.1" stroke-dasharray="1.2 1.5"/></svg>
<svg preserveAspectRatio="none" style="left:1517.5px;top:133.5px;" width="39" height="23.5" viewBox="0 0 120 69"><defs><linearGradient id="tgr1517" x1="0" x2="1"><stop offset="0" stop-color="#989390"/><stop offset="0.6" stop-color="#9b9ca3"/><stop offset="0.78" stop-color="#7d90ae"/></linearGradient></defs><rect width="120" height="69" fill="url(#tgr1517)"/><path d="M0 21.8 L23 24.7 V17.9 L53.3 15.5 L82 26.3 V29.2 L94.8 30 V36.9 L120 41.6 V69 H0Z" fill="#000"/><path d="M89 0 L87 6 L82 11 L83 16 L81 24 L82 29 L95 30 L97 37 L120 40 V4 L113 0Z" fill="#15171c"/></svg>
<div class="t" style="left:1564.4px;top:138.34px;font-size:12px;color:#e2e2e2;letter-spacing:0.162px;">VfR-Draft-Rendering-Self-illumination.jpg</div>
<div class="a" style="left:1494px;top:173px;width:13px;height:14px;background:#6a6a6a;border:1px solid #5c5c5c;border-right-color:#747474;border-bottom-color:#747474;"></div>
<svg style="left:1526px;top:170.5px;" width="19" height="20" viewBox="0 0 19 20"><path d="M0.8 2.8 H3 V0.8 H13 V2.8 H17.8 V19 H0.8Z" fill="none" stroke="#e4e4e4" stroke-width="1.5"/><path d="M3.6 6.6 H15 M3.6 9.4 H15 M3.6 12.2 H15 M3.6 15 H15" stroke="#e4e4e4" stroke-width="1.5"/></svg>
<div class="t" style="left:1559.5px;top:171.00px;font-size:13px;color:#ededed;letter-spacing:-0.901px;">Open</div>
<div class="a" style="left:1486px;top:229px;width:434px;height:1px;background:#474747;"></div>
<svg style="left:1790px;top:238px;" width="18" height="14" viewBox="0 0 18 14"><path d="M7 0 H12.4 L17.6 5 V13.6 H7 V10 H11 V5 H7Z" fill="#d8d8d8"/><path d="M12.2 0.4 V5.2 H17.2" fill="none" stroke="#535353" stroke-width="1.2"/><path d="M0 7.4 H9.6 M4.8 2.6 V12.2" stroke="#d8d8d8" stroke-width="2.8"/></svg>
<svg style="left:1832.5px;top:238.5px;" width="17" height="13.5" viewBox="0 0 17 13.5"><path d="M0 2.4 H4.4 L5.8 0 H11.2 L12.6 2.4 H17 V13.5 H0Z" fill="#d8d8d8"/><circle cx="8.5" cy="7.6" r="3.6" fill="#535353"/><circle cx="8.5" cy="7.6" r="2" fill="#d8d8d8"/></svg>
<svg style="left:1871.5px;top:237.5px;" width="13" height="15" viewBox="0 0 13 15"><path d="M0 2.6 H13 M4.4 2.4 V0.7 H8.6 V2.4" fill="none" stroke="#d8d8d8" stroke-width="1.4"/><path d="M1.4 4 H11.6 V14.3 H1.4Z" fill="none" stroke="#d8d8d8" stroke-width="1.4"/><path d="M4.6 5.4 V13 M6.5 5.4 V13 M8.4 5.4 V13" stroke="#d8d8d8" stroke-width="1.1"/></svg>
<div class="a" style="left:1486px;top:261px;width:434px;height:3px;background:#3d3d3d;"></div>
<div class="a" style="left:1486px;top:264px;width:434px;height:34px;background:#454545;"></div>
<div class="a" style="left:1486px;top:297px;width:434px;height:1px;background:#3c3c3c;"></div>
<div class="a" style="left:1486px;top:264px;width:83px;height:34px;background:#535353;"></div>
<div class="a" style="left:1569px;top:264px;width:1px;height:33px;background:#3c3c3c;"></div>
<div class="t" style="left:1497.7px;top:272.90px;font-size:13px;color:#f2f2f2;font-weight:bold;letter-spacing:-0.411px;">Properties</div>
<svg style="left:1903px;top:277.5px;" width="10" height="8" viewBox="0 0 10 8"><path d="M0 0.6 H10 M0 2.9 H10 M0 5.2 H10 M0 7.5 H10" stroke="#c4c4c4" stroke-width="1"/></svg>
<div class="a" style="left:1500px;top:308px;width:26px;height:26px;background:#3b3b3b;border-radius:2px;"></div>
<svg style="left:1506.5px;top:312px;" width="13" height="17" viewBox="0 0 13 17"><path d="M0.8 0.8 H8 L12.2 5 V16.2 H0.8Z M7.8 0.8 V5.2 H12.2" fill="none" stroke="#e8e8e8" stroke-width="1.4"/></svg>
<div class="t" style="left:1535.0px;top:315.60px;font-size:13px;color:#dddddd;letter-spacing:-0.322px;">Document</div>
<div class="a" style="left:1486px;top:340px;width:434px;height:1px;background:#454545;"></div>
<div class="a" style="left:1900px;top:341px;width:20px;height:270px;background:#4d4d4d;"></div>
<div class="a" style="left:1902px;top:363px;width:14px;height:108px;background:#6a6a6a;border-radius:1px;"></div>
<svg style="left:1905px;top:355px;" width="8" height="5" viewBox="0 0 8 5"><path d="M0.5 4.4 L4 1 L7.5 4.4" fill="none" stroke="#9a9a9a" stroke-width="1.1"/></svg>
<svg style="left:1905px;top:597px;" width="8" height="5" viewBox="0 0 8 5"><path d="M0.5 0.6 L4 4 L7.5 0.6" fill="none" stroke="#9a9a9a" stroke-width="1.1"/></svg>
<svg style="left:1494.5px;top:355.5px;" width="11" height="7" viewBox="0 0 11 7"><path d="M0.5 0.5 L5.5 6 L10.5 0.5" fill="none" stroke="#c8c8c8" stroke-width="1.2"/></svg>
<div class="t" style="left:1515.0px;top:352.70px;font-size:13px;color:#f0f0f0;font-weight:bold;letter-spacing:-0.650px;">Canvas</div>
<div class="t" style="left:1551.8px;top:384.54px;font-size:12px;color:#d6d6d6;letter-spacing:-0.126px;">W</div>
<div class="a" style="left:1569px;top:379.5px;width:66px;height:20.5px;background:#454545;border:1px solid #686868;border-radius:2px;"></div>
<div class="t" style="left:1575.2px;top:384.32px;font-size:12.5px;color:#ececec;letter-spacing:0.003px;">1200 px</div>
<div class="t" style="left:1654.0px;top:384.54px;font-size:12px;color:#d6d6d6;letter-spacing:0.396px;">X</div>
<div class="a" style="left:1671px;top:379.5px;width:66px;height:20.5px;background:#505050;border:1px solid #606060;border-radius:2px;"></div>
<div class="t" style="left:1677.4px;top:384.32px;font-size:12.5px;color:#777;letter-spacing:-0.076px;">0 px</div>
<div class="t" style="left:1554.8px;top:415.54px;font-size:12px;color:#d6d6d6;letter-spacing:-0.866px;">H</div>
<div class="a" style="left:1569px;top:410.5px;width:66px;height:20.5px;background:#454545;border:1px solid #686868;border-radius:2px;"></div>
<div class="t" style="left:1575.2px;top:415.32px;font-size:12.5px;color:#ececec;letter-spacing:0.054px;">691 px</div>
<div class="t" style="left:1654.5px;top:415.84px;font-size:12px;color:#d6d6d6;letter-spacing:-0.104px;">Y</div>
<div class="a" style="left:1671px;top:410.5px;width:66px;height:20.5px;background:#505050;border:1px solid #606060;border-radius:2px;"></div>
<div class="t" style="left:1677.4px;top:415.32px;font-size:12.5px;color:#777;letter-spacing:-0.076px;">0 px</div>
<svg style="left:1509px;top:396.5px;" width="11" height="19" viewBox="0 0 11 19"><g fill="none" stroke="#e6e6e6" stroke-width="1.7"><path d="M2.2 8 V4.6 A3.3 3.3 0 0 1 8.8 4.6 V8"/><path d="M2.2 11 V14.4 A3.3 3.3 0 0 0 8.8 14.4 V11"/><path d="M5.5 5.4 V13.6"/></g></svg>
<svg style="left:1577.5px;top:450.5px;" width="19" height="22" viewBox="0 0 19 22"><rect x="0.7" y="0.7" width="17.6" height="20.6" fill="none" stroke="#e0e0e0" stroke-width="1.3"/><circle cx="9.5" cy="7.6" r="2.6" fill="#e0e0e0"/><path d="M4.8 20.6 V14 C4.8 10.6 14.2 10.6 14.2 14 V20.6Z" fill="#e0e0e0"/></svg>
<div class="a" style="left:1604px;top:447px;width:29px;height:29px;background:#383838;border-radius:2px;"></div>
<svg style="left:1608.8px;top:453.5px;" width="20" height="16" viewBox="0 0 20 16"><rect x="0.7" y="0.7" width="18.6" height="14.6" fill="none" stroke="#ececec" stroke-width="1.3"/><circle cx="10" cy="5.6" r="2.3" fill="#ececec"/><path d="M5.4 14.6 V11.4 C5.4 8.4 14.6 8.4 14.6 11.4 V14.6Z" fill="#ececec"/></svg>
<div class="t" style="left:1572.2px;top:492.64px;font-size:12px;color:#d6d6d6;letter-spacing:0.305px;">Resolution: 72 pixels/inch</div>
<div class="t" style="left:1532.2px;top:524.04px;font-size:12px;color:#d6d6d6;letter-spacing:-0.173px;">Mode</div>
<div class="a" style="left:1571.5px;top:519px;width:165px;height:24px;background:#434343;border:1px solid #5a5a5a;border-radius:2px;"></div>
<div class="t" style="left:1581.8px;top:525.42px;font-size:12.5px;color:#ececec;letter-spacing:-0.754px;">RGB Color</div>
<svg style="left:1723.5px;top:529px;" width="8" height="5" viewBox="0 0 8 5"><path d="M0.5 0.5 L4 4.2 L7.5 0.5" fill="none" stroke="#d0d0d0" stroke-width="1.2"/></svg>
<div class="a" style="left:1571.5px;top:550px;width:165px;height:24px;background:#434343;border:1px solid #5a5a5a;border-radius:2px;"></div>
<div class="t" style="left:1581.8px;top:556.42px;font-size:12.5px;color:#ececec;letter-spacing:-0.054px;">8 Bits/Channel</div>
<svg style="left:1723.5px;top:560px;" width="8" height="5" viewBox="0 0 8 5"><path d="M0.5 0.5 L4 4.2 L7.5 0.5" fill="none" stroke="#d0d0d0" stroke-width="1.2"/></svg>
<div class="t" style="left:1547.2px;top:590.24px;font-size:12px;color:#d6d6d6;letter-spacing:-0.276px;">Fill</div>
<div class="a" style="left:1570.5px;top:584px;width:23px;height:22.5px;background:#545454;border:1px solid #3e3e3e;"></div>
<div class="a" style="left:1599.5px;top:585.5px;width:137px;height:22.5px;background:#505050;border:1px solid #5e5e5e;border-radius:2px;"></div>
<div class="t" style="left:1609.8px;top:590.72px;font-size:12.5px;color:#858585;letter-spacing:-0.157px;">Background Color</div>
<svg style="left:1723.5px;top:595px;" width="8" height="5" viewBox="0 0 8 5"><path d="M0.5 0.5 L4 4.2 L7.5 0.5" fill="none" stroke="#666" stroke-width="1.2"/></svg>
<div class="a" style="left:1486px;top:645px;width:434px;height:3px;background:#3d3d3d;"></div>
<div class="a" style="left:1486px;top:648px;width:434px;height:35px;background:#454545;"></div>
<div class="a" style="left:1486px;top:682px;width:434px;height:1px;background:#3c3c3c;"></div>
<div class="a" style="left:1486px;top:648px;width:59px;height:35px;background:#535353;"></div>
<div class="a" style="left:1545px;top:648px;width:1px;height:34px;background:#3c3c3c;"></div>
<div class="a" style="left:1619px;top:648px;width:1px;height:34px;background:#3c3c3c;"></div>
<div class="a" style="left:1674px;top:648px;width:1px;height:34px;background:#3c3c3c;"></div>
<div class="t" style="left:1497.7px;top:656.50px;font-size:13px;color:#f2f2f2;font-weight:bold;letter-spacing:-1.044px;">Layers</div>
<div class="t" style="left:1556.2px;top:656.50px;font-size:13px;color:#bdbdbd;font-weight:bold;letter-spacing:-0.759px;">Channels</div>
<div class="t" style="left:1631.7px;top:656.50px;font-size:13px;color:#bdbdbd;font-weight:bold;letter-spacing:-0.951px;">Paths</div>
<svg style="left:1903px;top:660.5px;" width="10" height="8" viewBox="0 0 10 8"><path d="M0 0.6 H10 M0 2.9 H10 M0 5.2 H10 M0 7.5 H10" stroke="#c4c4c4" stroke-width="1"/></svg>
<div class="a" style="left:1491.5px;top:695px;width:106px;height:21.5px;background:#4f4f4f;border:1px solid #5a5a5a;border-radius:2px;"></div>
<svg style="left:1500px;top:699px;" width="14" height="13" viewBox="0 0 14 13"><circle cx="5.2" cy="5.2" r="4.2" fill="none" stroke="#a8a8a8" stroke-width="1.5"/><path d="M8.4 8.4 L12.6 12.2" stroke="#a8a8a8" stroke-width="2"/></svg>
<div class="t" style="left:1518.0px;top:699.12px;font-size:12.5px;color:#8c8c8c;letter-spacing:-0.507px;">Kind</div>
<svg style="left:1585.5px;top:704px;" width="8" height="5" viewBox="0 0 8 5"><path d="M0.5 0.5 L4 4.2 L7.5 0.5" fill="none" stroke="#666" stroke-width="1.2"/></svg>
<svg style="left:1614px;top:699px;" width="16" height="12.5" viewBox="0 0 16 12.5"><rect x="0.7" y="0.7" width="14.6" height="11" fill="none" stroke="#a6a6a6" stroke-width="1.3"/><path d="M2.6 9.8 L6 5.4 L8.4 8.2 L10.4 6.4 L13.2 9.8Z" fill="#a6a6a6"/></svg>
<svg style="left:1645px;top:698.5px;" width="13" height="13" viewBox="0 0 13 13"><circle cx="6.5" cy="6.5" r="5.7" fill="none" stroke="#a6a6a6" stroke-width="1.3"/><path d="M2.5 10.5 A5.7 5.7 0 0 1 10.5 2.5Z" fill="#a6a6a6"/></svg>
<svg style="left:1675.5px;top:699px;" width="13" height="12.5" viewBox="0 0 13 12.5"><path d="M0.4 0.4 H12.6 V3.8 H11.4 C11.2 2.6 10.6 2 9.4 2 H7.8 V10.4 C7.8 11 8.2 11.2 9.4 11.2 V12.4 H3.6 V11.2 C4.8 11.2 5.2 11 5.2 10.4 V2 H3.6 C2.4 2 1.8 2.6 1.6 3.8 H0.4Z" fill="#a6a6a6"/></svg>
<svg style="left:1705px;top:698.5px;" width="14" height="14" viewBox="0 0 14 14"><rect x="2.2" y="2.2" width="9.6" height="9.6" fill="none" stroke="#a6a6a6" stroke-width="1.3"/><g fill="#a6a6a6"><rect x="0" y="0" width="4" height="4"/><rect x="10" y="0" width="4" height="4"/><rect x="0" y="10" width="4" height="4"/><rect x="10" y="10" width="4" height="4"/></g></svg>
<svg style="left:1736px;top:698px;" width="14" height="14" viewBox="0 0 14 14"><path d="M4.6 4 V0.7 H9.6 L13 4 V12.6 H8" fill="none" stroke="#a6a6a6" stroke-width="1.3"/><path d="M9.4 0.8 V4.2 H13" fill="none" stroke="#a6a6a6" stroke-width="1.1"/><rect x="0.6" y="6" width="7" height="7.4" fill="#a6a6a6"/></svg>
<div class="a" style="left:1765px;top:703px;width:8px;height:12px;background:#4c4c4c;border-radius:3px;"></div>
<svg style="left:1764px;top:694.5px;" width="10" height="10" viewBox="0 0 10 10"><circle cx="5" cy="5" r="4.8" fill="#9c9c9c"/></svg>
<div class="a" style="left:1486px;top:721px;width:434px;height:1px;background:#474747;"></div>
<div class="a" style="left:1491.5px;top:730.5px;width:159px;height:21.5px;background:#4f4f4f;border:1px solid #5a5a5a;border-radius:2px;"></div>
<div class="t" style="left:1501.2px;top:734.22px;font-size:12.5px;color:#8c8c8c;letter-spacing:-0.237px;">Normal</div>
<svg style="left:1638.5px;top:739.5px;" width="8" height="5" viewBox="0 0 8 5"><path d="M0.5 0.5 L4 4.2 L7.5 0.5" fill="none" stroke="#666" stroke-width="1.2"/></svg>
<div class="t" style="left:1660.3px;top:735.02px;font-size:12.5px;color:#8c8c8c;letter-spacing:-0.093px;">Opacity:</div>
<div class="a" style="left:1712px;top:731px;width:44px;height:18.5px;background:#454545;border:1px solid #5a5a5a;"></div>
<div class="a" style="left:1755px;top:731px;width:18px;height:18.5px;background:#4e4e4e;border:1px solid #5a5a5a;"></div>
<div class="t" style="left:1716.5px;top:734.02px;font-size:12.5px;color:#737373;letter-spacing:0.676px;">100%</div>
<svg style="left:1760.5px;top:738.5px;" width="8" height="5" viewBox="0 0 8 5"><path d="M0.5 0.5 L4 4.2 L7.5 0.5" fill="none" stroke="#666" stroke-width="1.2"/></svg>
<div class="a" style="left:1486px;top:756px;width:434px;height:1px;background:#474747;"></div>
<div class="t" style="left:1494.0px;top:769.42px;font-size:12.5px;color:#8c8c8c;letter-spacing:-0.294px;">Lock:</div>
<svg style="left:1535px;top:768px;" width="14.5" height="14.5" viewBox="0 0 14.5 14.5"><rect x="0.6" y="0.6" width="13.3" height="13.3" fill="none" stroke="#a6a6a6" stroke-width="1.2"/><path d="M0.6 0.6 h4.4 v4.4 h-4.4z M9.4 0.6 h4.4 v4.4 h-4.4z M5 5 h4.4 v4.4 h-4.4z M0.6 9.4 h4.4 v4.4 h-4.4z M9.4 9.4 h4.4 v4.4 h-4.4z" fill="#a6a6a6"/></svg>
<svg style="left:1561px;top:767px;" width="18" height="16" viewBox="0 0 18 16"><path d="M15.6 0.6 C16.6 0 17.6 1 17 2 L9.6 11 L7.2 9Z" fill="#a6a6a6"/><path d="M6.4 9.8 L8.8 11.8 C8.8 14.4 6.4 15.8 1 15.6 C3 14.2 3.2 10.6 6.4 9.8Z" fill="#a6a6a6"/></svg>
<svg style="left:1588px;top:767px;" width="16.4" height="16.4" viewBox="0 0 20 20"><path d="M10 0 L13.4 4.2 H10.9 V9.1 H15.8 V6.6 L20 10 L15.8 13.4 V10.9 H10.9 V15.8 H13.4 L10 20 L6.6 15.8 H9.1 V10.9 H4.2 V13.4 L0 10 L4.2 6.6 V9.1 H9.1 V4.2 H6.6Z" fill="#a6a6a6"/></svg>
<svg style="left:1614px;top:767px;" width="18.5" height="17" viewBox="0 0 18.5 17"><path d="M3.8 0 V13 H18.5 M0 3.6 H12 M14.4 5.2 V16.6 M16 3.6 L12.8 0.6" fill="none" stroke="#a6a6a6" stroke-width="1.4"/><path d="M3 15.6 H5 M14.4 3.6 H12.4" stroke="#a6a6a6" stroke-width="1.4"/></svg>
<svg style="left:1646px;top:766.5px;" width="12.5" height="15.5" viewBox="0 0 12.5 15.5"><path d="M2.8 7 V4.4 A3.4 3.4 0 0 1 9.6 4.4 V7" fill="none" stroke="#a6a6a6" stroke-width="1.8"/><rect x="0" y="6.6" width="12.5" height="8.8" rx="1" fill="#a6a6a6"/><circle cx="6.2" cy="11" r="1.3" fill="#535353"/></svg>
<div class="t" style="left:1687.2px;top:769.42px;font-size:12.5px;color:#8c8c8c;letter-spacing:-0.285px;">Fill:</div>
<div class="a" style="left:1712px;top:766.5px;width:44px;height:18.5px;background:#454545;border:1px solid #5a5a5a;"></div>
<div class="a" style="left:1755px;top:766.5px;width:18px;height:18.5px;background:#4e4e4e;border:1px solid #5a5a5a;"></div>
<div class="t" style="left:1716.5px;top:769.42px;font-size:12.5px;color:#737373;letter-spacing:0.676px;">100%</div>
<svg style="left:1760.5px;top:774px;" width="8" height="5" viewBox="0 0 8 5"><path d="M0.5 0.5 L4 4.2 L7.5 0.5" fill="none" stroke="#666" stroke-width="1.2"/></svg>
<div class="a" style="left:1899px;top:795px;width:14px;height:36px;background:#4d4d4d;"></div>
<div class="a" style="left:1486px;top:831px;width:434px;height:166px;background:#4d4d4d;"></div>
<div class="a" style="left:1913px;top:831px;width:7px;height:166px;background:#515151;"></div>
<div class="a" style="left:1524px;top:795px;width:375px;height:35px;background:#696969;"></div>
<div class="a" style="left:1486px;top:830px;width:413px;height:1px;background:#474747;"></div>
<svg style="left:1497px;top:809px;" width="16" height="10" viewBox="0 0 16 10"><path d="M0 5 C3.4 -1.4 12.6 -1.4 16 5 C12.6 11.4 3.4 11.4 0 5Z" fill="#f0f0f0"/><circle cx="8" cy="5" r="3.3" fill="#535353"/><circle cx="8" cy="5" r="1.7" fill="#f0f0f0"/></svg>
<div class="a" style="left:1528px;top:800px;width:40px;height:25px;background:#2e2e2e;"></div>
<svg preserveAspectRatio="none" style="left:1528.8px;top:800.8px;" width="38.4" height="23.4" viewBox="0 0 120 69"><defs><linearGradient id="tgr1528" x1="0" x2="1"><stop offset="0" stop-color="#989390"/><stop offset="0.6" stop-color="#9b9ca3"/><stop offset="0.78" stop-color="#7d90ae"/></linearGradient></defs><rect width="120" height="69" fill="url(#tgr1528)"/><path d="M0 21.8 L23 24.7 V17.9 L53.3 15.5 L82 26.3 V29.2 L94.8 30 V36.9 L120 41.6 V69 H0Z" fill="#000"/><path d="M89 0 L87 6 L82 11 L83 16 L81 24 L82 29 L95 30 L97 37 L120 40 V4 L113 0Z" fill="#15171c"/></svg>
<div class="t" style="left:1581.3px;top:806.50px;font-size:13px;color:#f0f0f0;font-style:italic;letter-spacing:-0.298px;">Background</div>
<svg style="left:1866.5px;top:805.5px;" width="13.5" height="14.5" viewBox="0 0 13.5 14.5"><path d="M3.2 6.4 V4.2 A3.5 3.5 0 0 1 10.2 4.2 V6.4" fill="none" stroke="#e4e4e4" stroke-width="1.4"/><rect x="0.7" y="6.4" width="12" height="7.4" fill="none" stroke="#e4e4e4" stroke-width="1.4"/><circle cx="6.7" cy="10.1" r="1.2" fill="#e4e4e4"/></svg>
<div class="a" style="left:1486px;top:997px;width:434px;height:1px;background:#434343;"></div>
<svg style="left:1665px;top:1009px;" width="18.5" height="10" viewBox="0 0 18.5 10"><path d="M8 1 H5 A4 4 0 0 0 5 9 H8 M10.5 1 H13.5 A4 4 0 0 1 13.5 9 H10.5 M5.4 5 H13.2" fill="none" stroke="#8e8e8e" stroke-width="1.7"/></svg>
<div class="t" style="left:1702.0px;top:1005.90px;font-size:15px;color:#8e8e8e;font-style:italic;letter-spacing:1.200px;">fx</div>
<svg style="left:1733.5px;top:1008px;" width="17" height="12" viewBox="0 0 17 12"><rect width="17" height="12" rx="1" fill="#c2c2c2"/><circle cx="8.5" cy="6" r="3.4" fill="#4a4a4a"/></svg>
<svg style="left:1769px;top:1007.5px;" width="14" height="14" viewBox="0 0 14 14"><circle cx="7" cy="7" r="6.2" fill="none" stroke="#c2c2c2" stroke-width="1.4"/><path d="M2.6 11.4 A6.2 6.2 0 0 0 11.4 2.6Z" fill="#c2c2c2"/></svg>
<svg style="left:1780.5px;top:1021px;" width="5" height="3" viewBox="0 0 5 3"><path d="M0 0 H5 L2.5 3Z" fill="#e8e8e8"/></svg>
<svg style="left:1801.5px;top:1008px;" width="16" height="12.5" viewBox="0 0 16 12.5"><path d="M0 0.4 H6 L7.6 2.2 H16 V12.5 H0Z" fill="#c2c2c2"/></svg>
<svg style="left:1836.5px;top:1007.5px;" width="14" height="14" viewBox="0 0 14 14"><rect x="0.8" y="0.8" width="12.4" height="12.4" rx="1" fill="none" stroke="#ececec" stroke-width="1.5"/><path d="M3.6 7 H10.4 M7 3.6 V10.4" stroke="#ececec" stroke-width="1.6"/></svg>
<svg style="left:1870.5px;top:1007px;" width="13" height="15" viewBox="0 0 13 15"><path d="M0 2.6 H13 M4.4 2.4 V0.7 H8.6 V2.4" fill="none" stroke="#8e8e8e" stroke-width="1.4"/><path d="M1.4 4 H11.6 V14.3 H1.4Z" fill="none" stroke="#8e8e8e" stroke-width="1.4"/><path d="M4.6 5.4 V13 M6.5 5.4 V13 M8.4 5.4 V13" stroke="#8e8e8e" stroke-width="1.1"/></svg>
<div class="a" style="left:1486px;top:1029px;width:434px;height:2px;background:#434a5c;"></div>
<!-- END -->
</body>
</html>
